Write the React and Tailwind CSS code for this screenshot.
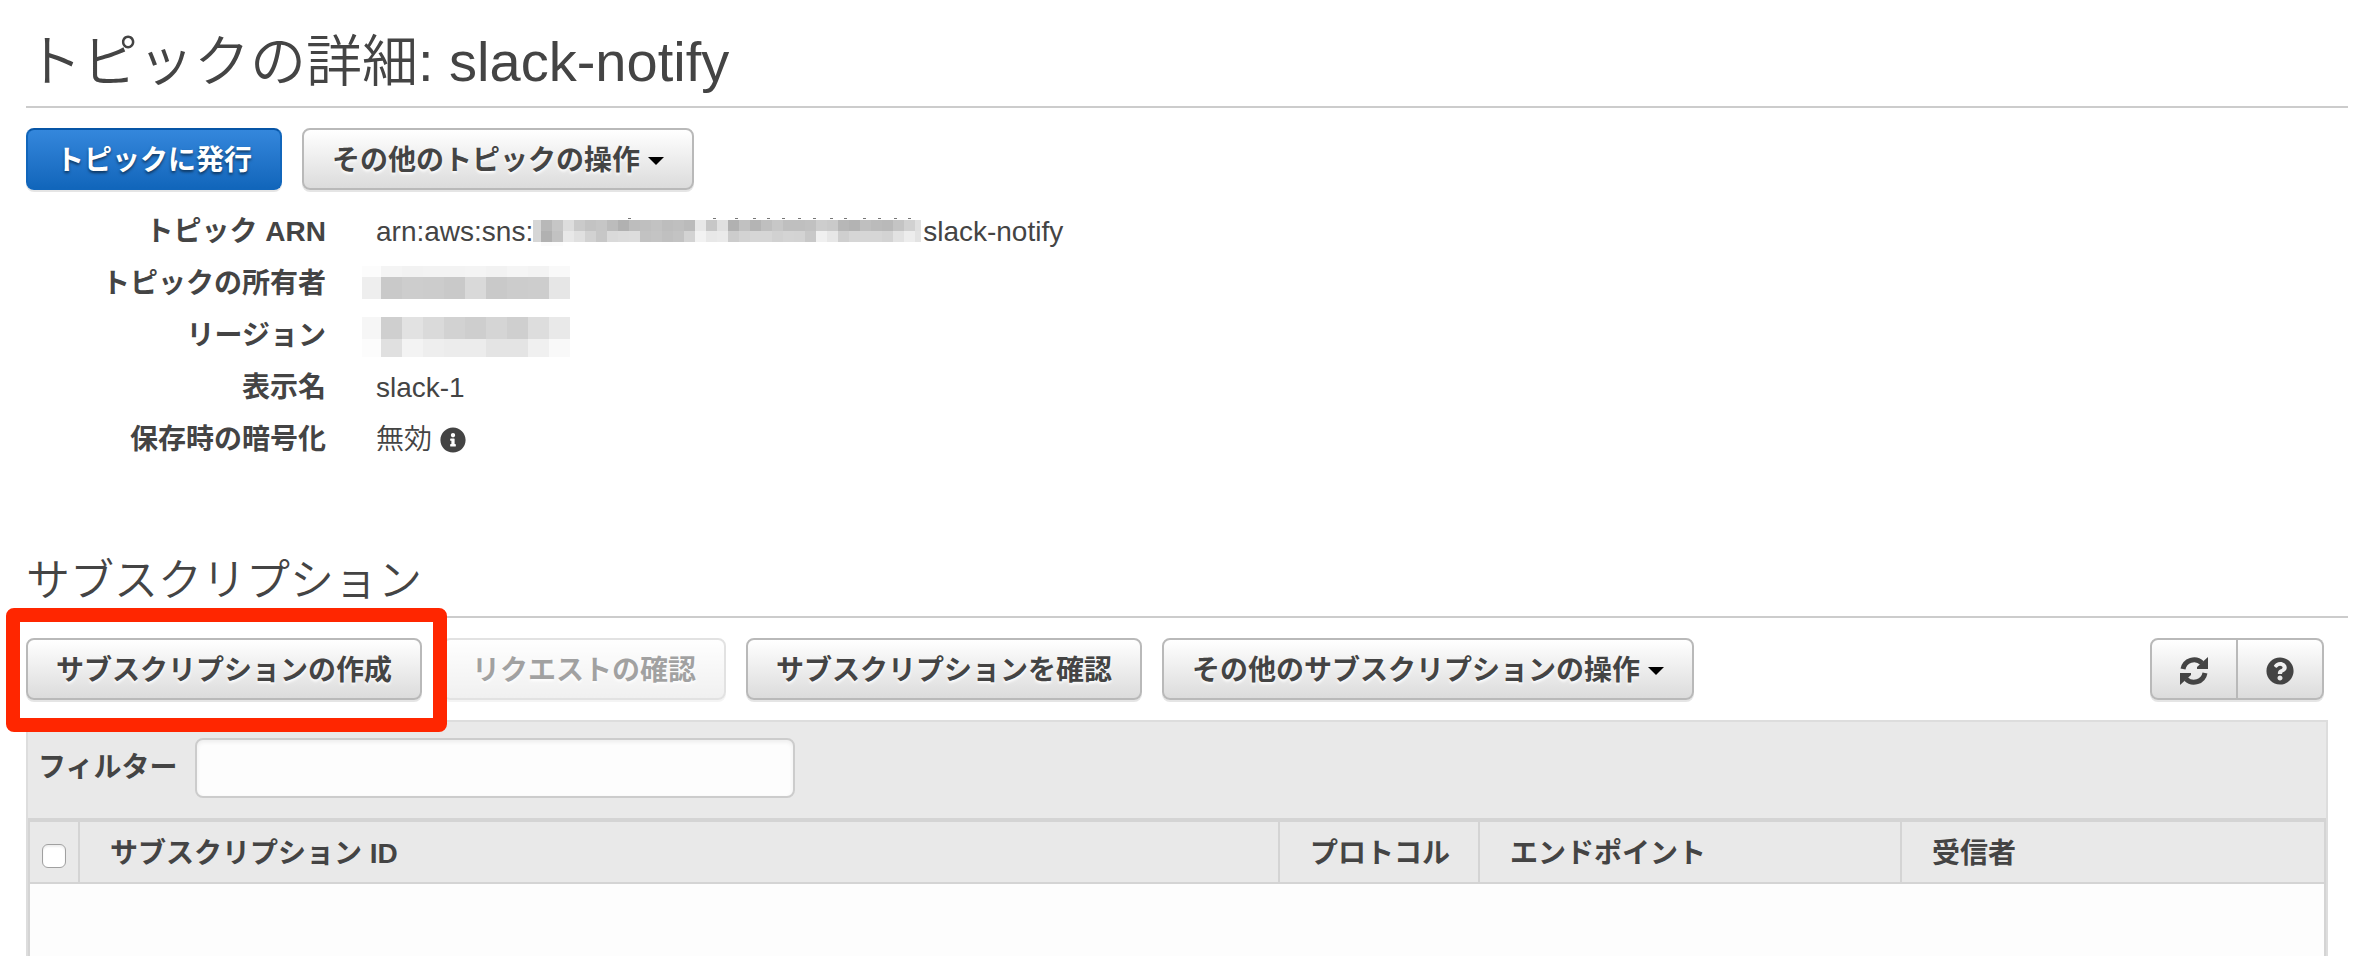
import { FaInfoCircle, FaQuestionCircle } from 'react-icons/fa'

// Mosaicos que ocultan los datos de la cuenta: grises por fila
const ARN_ROWS = [
  { y: 2, h: 11, cells: 'd6 b8 c6 dd ca c3 c6 bc b1 bd bf c2 bd bf bb e8 c7 e0 b1 c1 b4 bf c7 bf bf c1 cd ca b7 b3 bf bb b9 c4 d1 e0' },
  { y: 13, h: 11, cells: 'd6 b1 c2 e8 e0 d2 c7 da dc dd c2 c4 c0 c3 d3 f2 e8 ea cc d3 d6 d6 d1 d4 d3 c8 f0 e7 cf d6 d6 d6 d3 e2 ed e3' },
  { y: 24, h: 4, cells: 'ff fb fc' },
]
const ARN_MARKS = [95, 180, 202, 220, 234, 249, 265, 280, 297, 311, 330, 345, 361, 375]

const OWNER_ROWS = [
  { y: 0, h: 11, cells: 'fc f4 f2 f3 f3 f4 f2 f5 f3 f9' },
  { y: 11, h: 22, cells: 'ee c9 cd cc c9 d9 c9 cc cd e6' },
]
const REGION_ROWS = [
  { y: 0, h: 22, cells: 'f6 cf e2 da d2 ce d5 cf dd e9' },
  { y: 22, h: 18, cells: 'fc e0 f3 ee ec ec e4 e4 f0 f9' },
]

function Mosaic({ rows, first, step, width, height, marks = [], className }) {
  return (
    <svg width={width} height={height} viewBox={`0 0 ${width} ${height}`} shapeRendering="crispEdges" className={className} aria-hidden="true">
      {marks.map((x) => (
        <rect key={x} x={x} y="0" width="3" height="1" fill="#777" />
      ))}
      {rows.map((row) =>
        row.cells.split(' ').map((c, i) => (
          <rect
            key={`${row.y}-${i}`}
            x={i === 0 ? 0 : first + (i - 1) * step}
            y={row.y}
            width={i === 0 ? first : step}
            height={row.h}
            fill={`#${c}${c}${c}`}
          />
        ))
      )}
    </svg>
  )
}

function RefreshIcon() {
  return (
    <svg width="28" height="28" viewBox="0 0 28 28" className="mt-1" aria-hidden="true">
      <path d="M3 12A11.3 11.3 0 0 1 22 6" fill="none" stroke="#444" strokeWidth="5" />
      <path d="M28 0V12H17V10Z" fill="#444" />
      <path d="M25 16A11.3 11.3 0 0 1 6 22" fill="none" stroke="#444" strokeWidth="5" />
      <path d="M0 28V16H11V18Z" fill="#444" />
    </svg>
  )
}

function Caret() {
  return (
    <svg width="16" height="8" viewBox="0 0 16 8" className="ml-2" aria-hidden="true">
      <path d="M0 0H16L8 8Z" fill="#000" />
    </svg>
  )
}

const BTN = 'flex h-[62px] items-center rounded-lg border-2 px-[28px] pt-[3px] text-[28px] leading-[40px] font-bold whitespace-nowrap'
const GREY = 'border-[#b9b9b9] bg-linear-to-b from-white to-[#dcdcdc] shadow-[0_2px_0_#e5e5e5] text-[#444] [text-shadow:0_2px_3px_#fff]'

function Button({ children, caret, disabled, className = '' }) {
  return (
    <button type="button" disabled={disabled} className={`${BTN} ${GREY} ${className}`}>
      {children}
      {caret && <Caret />}
    </button>
  )
}

function Row({ label, children }) {
  return (
    <>
      <dt className="text-right font-bold">{label}</dt>
      <dd className="flex items-center">{children}</dd>
    </>
  )
}

const TH = 'border-b-2 border-[#d4d4d4] px-[30px] pt-[3px] whitespace-nowrap'

export default function App() {
  return (
    <main
      lang="ja"
      className="flex min-h-screen flex-col bg-white pt-5 pr-[14px] pl-[26px] font-['Liberation_Sans','Noto_Sans_CJK_JP',sans-serif] text-[28px] text-[#444]"
    >
      <h1 className="border-b-2 border-[#ccc] pb-[2px] text-[56px] leading-[84px] font-[350]">
        トピックの詳細: slack-notify
      </h1>

      <div className="mt-5 flex gap-5">
        <button
          type="button"
          className={`${BTN} border-[#1166bb] border-t-[#0755a6] bg-linear-to-b from-[#3487dc] to-[#1166bb] text-white shadow-[0_2px_0_#e5e5e5] [text-shadow:0_2px_3px_#0008]`}
        >
          トピックに発行
        </button>
        <Button caret>その他のトピックの操作</Button>
      </div>

      {/* Detalles del tema */}
      <dl className="mt-4 grid auto-rows-[52px] grid-cols-[300px_1fr] gap-x-9 leading-[52px]">
        <Row label="トピック ARN">
          <span className="pl-[14px]">arn:aws:sns:</span>
          <Mosaic rows={ARN_ROWS} first={8} step={11} width={388} height={28} marks={ARN_MARKS} className="mr-[2px]" />
          <span>slack-notify</span>
        </Row>
        <Row label="トピックの所有者">
          <Mosaic rows={OWNER_ROWS} first={19} step={21} width={208} height={33} className="mb-1" />
        </Row>
        <Row label="リージョン">
          <Mosaic rows={REGION_ROWS} first={19} step={21} width={208} height={40} className="mt-[2px]" />
        </Row>
        <Row label="表示名">
          <span className="pl-[14px]">slack-1</span>
        </Row>
        <Row label="保存時の暗号化">
          <span className="pl-[14px] font-[350]">無効</span>
          <FaInfoCircle size={26} className="ml-2" />
        </Row>
      </dl>

      <h2 className="mt-[85px] border-b-2 border-[#ccc] pb-[5px] text-[44px] leading-[60px] font-[350]">サブスクリプション</h2>

      <div className="mt-5 mr-6 flex gap-5">
        <div className="relative">
          <Button>サブスクリプションの作成</Button>
          {/* Marco rojo que resalta el botón */}
          <div className="pointer-events-none absolute -top-[30px] -right-[25px] -bottom-[32px] -left-5 z-10 rounded-lg border-[14px] border-[#ff2600]" />
        </div>
        <Button disabled className="text-[#171717]! opacity-40">リクエストの確認</Button>
        <Button>サブスクリプションを確認</Button>
        <Button caret>その他のサブスクリプションの操作</Button>
        <div className="ml-auto flex">
          <button type="button" aria-label="更新" className={`flex h-[62px] w-[88px] items-center justify-center rounded-l-lg border-2 ${GREY}`}>
            <RefreshIcon />
          </button>
          <button type="button" aria-label="ヘルプ" className={`flex h-[62px] w-[86px] items-center justify-center rounded-r-lg border-2 border-l-0 ${GREY}`}>
            <FaQuestionCircle size={28} className="mt-1" />
          </button>
        </div>
      </div>

      <section className="mt-5 mr-5 flex flex-1 flex-col border-2 border-b-0 border-[#ddd] bg-[#e9e9e9]">
        <div className="flex items-center gap-[18px] px-[10px] pt-4 pb-5">
          <label htmlFor="filter" className="font-bold">フィルター</label>
          <input
            id="filter"
            type="text"
            className="h-[60px] w-[600px] rounded-lg border-2 border-[#ccc] bg-[#fdfdfd] px-3 shadow-[inset_0_2px_4px_#0001]"
          />
        </div>

        <div className="flex-1 border-x-2 border-t-4 border-[#d4d4d4] bg-[#fdfdfd]">
          <table className="w-full table-fixed border-separate border-spacing-0 text-left">
            <thead>
              <tr className="h-[62px] bg-[#e9e9e9]">
                <th className="w-[50px] border-r-2 border-b-2 border-[#d4d4d4] pl-3">
                  <input
                    type="checkbox"
                    aria-label="すべて選択"
                    className="mt-2 block size-6 appearance-none rounded-md border border-[#a0a0a0] bg-white shadow-[inset_0_2px_2px_#0001]"
                  />
                </th>
                <th className={`${TH} border-r-2`}>サブスクリプション ID</th>
                <th className={`${TH} w-[200px] border-r-2`}>プロトコル</th>
                <th className={`${TH} w-[422px] border-r-2`}>エンドポイント</th>
                <th className={`${TH} w-[422px]`}>受信者</th>
              </tr>
            </thead>
            <tbody />
          </table>
        </div>
      </section>
    </main>
  )
}
